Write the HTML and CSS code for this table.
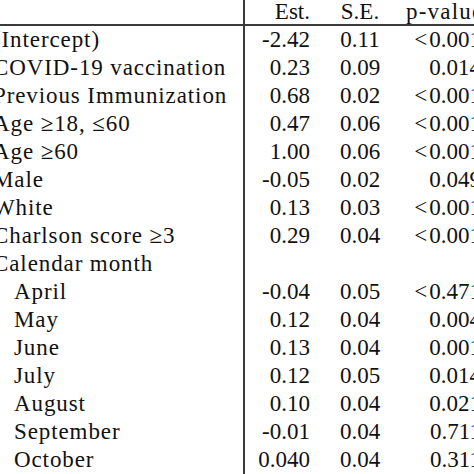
FILE: index.html
```html
<!DOCTYPE html>
<html>
<head>
<meta charset="utf-8">
<link rel="stylesheet" href="styles.css">
</head>
<body>
<div class="page">
<table class="reg">
  <colgroup>
    <col class="c-lab">
    <col class="c-est">
    <col class="c-se">
    <col class="c-pv">
  </colgroup>
  <thead>
    <tr><th class="lab"></th><th class="est">Est.</th><th class="se">S.E.</th><th class="pv">p-value</th></tr>
  </thead>
  <tbody>
    <tr><td class="lab">(Intercept)</td><td class="est">-2.42</td><td class="se">0.11</td><td class="pv"><span class="lt">&lt;</span>0.001</td></tr>
    <tr><td class="lab">COVID-19 vaccination</td><td class="est">0.23</td><td class="se">0.09</td><td class="pv">0.014</td></tr>
    <tr><td class="lab">Previous Immunization</td><td class="est">0.68</td><td class="se">0.02</td><td class="pv"><span class="lt">&lt;</span>0.001</td></tr>
    <tr><td class="lab">Age ≥18, ≤60</td><td class="est">0.47</td><td class="se">0.06</td><td class="pv"><span class="lt">&lt;</span>0.001</td></tr>
    <tr><td class="lab">Age ≥60</td><td class="est">1.00</td><td class="se">0.06</td><td class="pv"><span class="lt">&lt;</span>0.001</td></tr>
    <tr><td class="lab">Male</td><td class="est">-0.05</td><td class="se">0.02</td><td class="pv">0.049</td></tr>
    <tr><td class="lab">White</td><td class="est">0.13</td><td class="se">0.03</td><td class="pv"><span class="lt">&lt;</span>0.001</td></tr>
    <tr><td class="lab">Charlson score ≥3</td><td class="est">0.29</td><td class="se">0.04</td><td class="pv"><span class="lt">&lt;</span>0.001</td></tr>
    <tr><td class="lab">Calendar month</td><td class="est"></td><td class="se"></td><td class="pv"></td></tr>
    <tr><td class="lab sub">April</td><td class="est">-0.04</td><td class="se">0.05</td><td class="pv"><span class="lt">&lt;</span>0.471</td></tr>
    <tr><td class="lab sub">May</td><td class="est">0.12</td><td class="se">0.04</td><td class="pv">0.004</td></tr>
    <tr><td class="lab sub">June</td><td class="est">0.13</td><td class="se">0.04</td><td class="pv">0.001</td></tr>
    <tr><td class="lab sub">July</td><td class="est">0.12</td><td class="se">0.05</td><td class="pv">0.014</td></tr>
    <tr><td class="lab sub">August</td><td class="est">0.10</td><td class="se">0.04</td><td class="pv">0.021</td></tr>
    <tr><td class="lab sub">September</td><td class="est">-0.01</td><td class="se">0.04</td><td class="pv">0.711</td></tr>
    <tr><td class="lab sub">October</td><td class="est">0.040</td><td class="se">0.04</td><td class="pv">0.311</td></tr>
  </tbody>
</table>
</div>
</body>
</html>
```
FILE: styles.css
```css
html, body {
  margin: 0;
  padding: 0;
  background: #ffffff;
}
body {
  width: 474px;
  height: 474px;
  overflow: hidden;
}
.page {
  width: 474px;
  height: 474px;
  overflow: hidden;
}
.reg {
  margin-left: -7px;
  border-collapse: collapse;
  table-layout: fixed;
  width: 488px;
  font-family: "Liberation Serif", "Times New Roman", serif;
  font-size: 23px;
  color: #111111;
}
.c-lab { width: 251px; }
.c-est { width: 81px; }
.c-se { width: 70px; }
.c-pv { width: 86px; }
.reg th, .reg td {
  padding: 0;
  white-space: nowrap;
  vertical-align: top;
  font-weight: normal;
}
.reg th {
  height: 23.5px;
  line-height: 23.5px;
  border-bottom: 2px solid #3a3a3a;
}
.reg td {
  height: 24px;
  line-height: 24px;
  padding-top: 2px;
  padding-bottom: 2.07px;
}
.lab {
  text-align: left;
  border-right: 2px solid #3a3a3a;
  letter-spacing: 0.9px;
}
.reg td.sub {
  padding-left: 21px;
}
.reg .est {
  text-align: right;
  padding-right: 15px;
}
.se {
  text-align: center;
}
.pv {
  text-align: right;
}
.reg th.pv {
  text-align: left;
  padding-left: 11px;
  letter-spacing: 1.2px;
}
.lt {
  margin-left: 2px;
  margin-right: 2px;
}
```
